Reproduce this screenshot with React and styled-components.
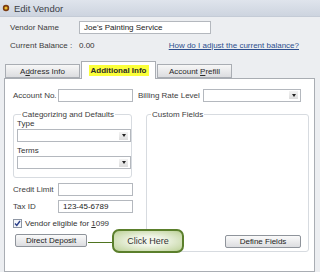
import React from 'react';
import styled, { createGlobalStyle } from 'styled-components';

const Global = createGlobalStyle`
  body {
    margin: 0;
    background: #eceef1;
    font-family: 'Liberation Sans', Arial, sans-serif;
    font-size: 8px;
    color: #333;
  }
`;

const Dialog = styled.div`
  width: 320px;
  height: 272px;
  overflow: hidden;
  background: #eceef1;
  display: flex;
  flex-direction: column;
`;

const TitleBar = styled.div`
  height: 16px;
  display: flex;
  align-items: center;
  gap: 4px;
  padding-left: 2px;
  background: linear-gradient(#dfe4ec, #cdd4df);
  border-bottom: 1px solid #c4cbd6;
  font-size: 9.5px;
  color: #3a3f48;
`;

const Header = styled.div`
  padding: 3px 0 0 10px;
  display: flex;
  flex-direction: column;
  gap: 4px;
`;

const Row = styled.div`
  display: flex;
  align-items: center;
  height: ${p => p.h || 14}px;
`;

const Label = styled.span`
  width: ${p => p.w}px;
  flex: none;
  color: #3c3c3c;
`;

const Input = styled.div`
  width: ${p => p.w}px;
  height: 13px;
  box-sizing: border-box;
  background: #fff;
  border: 1px solid #b4b8be;
  padding-left: 4px;
  display: flex;
  align-items: center;
  color: #222;
`;

const Link = styled.span`
  margin-left: auto;
  margin-right: 21px;
  color: #2d4f8e;
  text-decoration: underline;
`;

const Tabs = styled.div`
  display: flex;
  align-items: flex-end;
  padding-left: 5px;
  height: 17px;
  margin-top: 9px;
  position: relative;
  z-index: 1;
`;

const Tab = styled.div`
  width: 75px;
  box-sizing: border-box;
  height: ${p => (p.active ? 18 : 14)}px;
  margin-bottom: ${p => (p.active ? -1 : 0)}px;
  border: 1px solid #a9adb3;
  border-bottom: ${p => (p.active ? 'none' : '1px solid #a9adb3')};
  background: ${p => (p.active ? '#fff' : 'linear-gradient(#f7f7f7, #dcdde0)')};
  display: flex;
  align-items: center;
  justify-content: center;
  margin-right: 1px;
  color: #2a2a2a;
  font-weight: ${p => (p.active ? 'bold' : 'normal')};
`;

const Highlight = styled.span`
  background: #fbff3a;
  padding: 1px 2px;
`;

const Panel = styled.div`
  position: relative;
  margin-left: 4px;
  width: 311px;
  flex: 1;
  box-sizing: border-box;
  background: #fff;
  border: 1px solid #a9adb3;
  padding: 9px 0 0 8px;
`;

const TopRow = styled.div`
  display: flex;
  align-items: center;
  height: 14px;
`;

const Body = styled.div`
  display: flex;
  margin-top: 8px;
`;

const LeftCol = styled.div`
  width: 132px;
  flex: none;
  display: flex;
  flex-direction: column;
`;

const Group = styled.fieldset`
  margin: 0;
  padding: 0 0 6px 3px;
  border: 1px solid #d7dbe0;
  border-radius: 3px;
  box-sizing: border-box;
  width: ${p => p.w}px;
  height: ${p => p.h}px;
  display: flex;
  flex-direction: column;
  position: relative;
  & > legend {
    padding: 0 1px;
    margin-left: 4px;
    color: #3c3c3c;
    font-size: 8px;
  }
`;

const FieldLabel = styled.div`
  margin-top: ${p => p.mt || 0}px;
  height: 10px;
  line-height: 10px;
`;

const SelectBox = styled.div`
  width: ${p => p.w}px;
  height: 13px;
  box-sizing: border-box;
  border: 1px solid #b4b8be;
  background: #fff;
  display: flex;
  justify-content: flex-end;
  align-items: center;
  padding-right: 2px;
`;

const Arrow = styled.div`
  width: 9px;
  height: 8px;
  background: linear-gradient(#f3f3f3, #dcdcdc);
  display: flex;
  align-items: center;
  justify-content: center;
  &::after {
    content: '';
    border-left: 2.5px solid transparent;
    border-right: 2.5px solid transparent;
    border-top: 3px solid #222;
  }
`;

const Check = styled.div`
  width: 9px;
  height: 9px;
  box-sizing: border-box;
  border: 1px solid #8e96a3;
  background: #f4f6fa;
  margin-right: 3px;
  display: flex;
  align-items: center;
  justify-content: center;
`;

const Button = styled.div`
  width: ${p => p.w}px;
  height: 13px;
  box-sizing: border-box;
  border: 1px solid #8f949b;
  border-radius: 2px;
  background: linear-gradient(#fafafa, #dcdde0);
  display: flex;
  align-items: center;
  justify-content: center;
  color: #222;
`;

const Custom = styled(Group)`
  margin-left: 1px;
  justify-content: flex-end;
  align-items: flex-end;
  padding: 0 7px 3px 0;
`;

const Connector = styled.div`
  position: absolute;
  left: 83px;
  top: 163px;
  width: 27px;
  height: 1px;
  background: #4f7420;
`;

const Callout = styled.div`
  position: absolute;
  left: 107px;
  top: 150px;
  width: 72px;
  height: 24px;
  box-sizing: border-box;
  border: 2px solid #5b7f2c;
  border-radius: 7px;
  background: radial-gradient(ellipse at center, #f2f6ea 30%, #c8d9a9 85%, #a9c383 100%);
  display: flex;
  align-items: center;
  justify-content: center;
  font-size: 9px;
  color: #333;
`;

export default function App() {
  return (
    <Dialog>
      <Global />
      <TitleBar>
        <svg width="8" height="8" viewBox="0 0 8 8">
          <circle cx="4" cy="4" r="3.2" fill="#7a3b12" />
          <circle cx="4" cy="4" r="1.6" fill="#f0c030" />
        </svg>
        Edit Vendor
      </TitleBar>
      <Header>
        <Row>
          <Label w={69}>Vendor Name</Label>
          <Input w={132}>Joe's Painting Service</Input>
        </Row>
        <Row>
          <Label w={69}>Current Balance :</Label>
          <span>0.00</span>
          <Link>How do I adjust the current balance?</Link>
        </Row>
      </Header>
      <Tabs>
        <Tab><span>A<u>d</u>dress Info</span></Tab>
        <Tab active><Highlight>Additional Info</Highlight></Tab>
        <Tab><span>Account <u>P</u>refill</span></Tab>
      </Tabs>
      <Panel>
        <TopRow>
          <Label w={45}>Account No.</Label>
          <Input w={75} />
          <Label w={65} style={{ marginLeft: 5 }}>Billing Rate Level</Label>
          <SelectBox w={98}><Arrow /></SelectBox>
        </TopRow>
        <Body>
          <LeftCol>
            <Group w={119} h={68}>
              <legend>Categorizing and Defaults</legend>
              <FieldLabel>Type</FieldLabel>
              <SelectBox w={114}><Arrow /></SelectBox>
              <FieldLabel mt={4}>Terms</FieldLabel>
              <SelectBox w={114}><Arrow /></SelectBox>
            </Group>
            <Row h={13} style={{ marginTop: 5 }}>
              <Label w={45}>Credit Limit</Label>
              <Input w={75} />
            </Row>
            <Row h={13} style={{ marginTop: 4 }}>
              <Label w={45}>Tax ID</Label>
              <Input w={75}>123-45-6789</Input>
            </Row>
            <Row h={10} style={{ marginTop: 5 }}>
              <Check>
                <svg width="7" height="7" viewBox="0 0 7 7">
                  <path d="M1 3.5 L2.8 5.5 L6 1" stroke="#2a3f8a" strokeWidth="1.4" fill="none" />
                </svg>
              </Check>
              <span>Vendor eligible for <u>1</u>099</span>
            </Row>
            <Button w={72} style={{ marginTop: 6, marginLeft: 2 }}>Direct Deposit</Button>
          </LeftCol>
          <Custom w={163} h={142}>
            <legend>Custom Fields</legend>
            <Button w={76}>Define Fields</Button>
          </Custom>
        </Body>
        <Connector />
        <Callout>Click Here</Callout>
      </Panel>
    </Dialog>
  );
}
